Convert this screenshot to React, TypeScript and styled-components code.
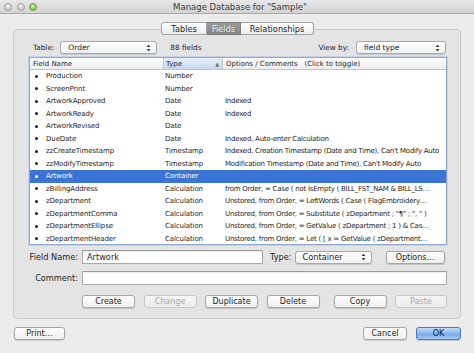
import React from 'react';
import styled, { createGlobalStyle, css } from 'styled-components';

const GlobalStyle = createGlobalStyle`
  html, body { margin: 0; padding: 0; }
  body {
    background: #ececec;
    font-family: "DejaVu Sans", "Liberation Sans", sans-serif;
    color: #1e1e1e;
  }
`;

const Window = styled.div`
  width: 474px;
  height: 353px;
  background: #ececec;
  display: flex;
  flex-direction: column;
  overflow: hidden;
`;

const TitleBar = styled.div`
  height: 13px;
  display: grid;
  grid-template-columns: 1fr auto 1fr;
  align-items: center;
  background: linear-gradient(#e8e8e8, #d3d3d3);
  border-bottom: 1px solid #a9a9a9;
`;

const Lights = styled.div`
  display: flex;
  gap: 4.5px;
  padding-left: 4px;
`;

const Light = styled.span<{ $green?: boolean }>`
  width: 8px;
  height: 8px;
  border-radius: 50%;
  box-sizing: border-box;
  border: 1px solid ${(p) => (p.$green ? '#6a9d45' : '#a3a3a3')};
  background: ${(p) =>
    p.$green
      ? 'radial-gradient(circle at 50% 35%, #d4f2b4, #7cc64a 70%)'
      : 'radial-gradient(circle at 50% 35%, #f4f4f4, #c9c9c9 70%)'};
`;

const Title = styled.div`
  font-size: 8.5px;
  color: #3c3c3c;
  padding-left: 6px;
`;

const TabRow = styled.div`
  display: flex;
  justify-content: center;
  margin-top: 8px;
  position: relative;
  z-index: 1;
  padding-left: 1px;
`;

const Tab = styled.div<{ $active?: boolean; $w: number }>`
  width: ${(p) => p.$w}px;
  height: 13px;
  box-sizing: border-box;
  display: flex;
  align-items: center;
  justify-content: center;
  font-size: 8.2px;
  border: 1px solid #a4a4a4;
  border-left-width: 0;
  background: linear-gradient(#ffffff, #ededed);
  color: #1e1e1e;
  &:first-child {
    border-left-width: 1px;
    border-radius: 3px 0 0 3px;
  }
  &:last-child {
    border-radius: 0 3px 3px 0;
  }
  ${(p) =>
    p.$active &&
    css`
      background: linear-gradient(#9a9a9a, #858585);
      border-color: #7c7c7c;
      color: #e6e6e6;
    `}
`;

const GroupBox = styled.div`
  margin: -6px 13px 0 13px;
  height: 290px;
  box-sizing: border-box;
  border: 1px solid #cbcbcb;
  border-radius: 4px;
  background: #e4e4e4;
  padding: 11px 13px 0 15px;
  display: flex;
  flex-direction: column;
`;

const TopRow = styled.div`
  display: flex;
  align-items: center;
  height: 13px;
`;

const Label = styled.span<{ $ml?: number; $size?: number }>`
  font-size: ${(p) => p.$size ?? 7.3}px;
  color: #1e1e1e;
  margin-left: ${(p) => p.$ml ?? 0}px;
  white-space: nowrap;
`;

const Spacer = styled.div`
  flex: 1;
`;

const SelectBox = styled.div<{ $w: number; $ml?: number; $size?: number }>`
  width: ${(p) => p.$w}px;
  height: 13px;
  margin-left: ${(p) => p.$ml ?? 0}px;
  box-sizing: border-box;
  display: flex;
  align-items: center;
  justify-content: space-between;
  padding: 0 5px 0 7px;
  font-size: ${(p) => p.$size ?? 7.5}px;
  border: 1px solid #a9a9a9;
  border-radius: 3px;
  background: linear-gradient(#ffffff, #f0f0f0);
  box-shadow: 0 0.5px 1px rgba(0, 0, 0, 0.12);
`;

const Arrows = () => (
  <svg width="5" height="8" viewBox="0 0 5 8">
    <path d="M2.5 0.5 L4.5 3 L0.5 3 Z" fill="#444" />
    <path d="M2.5 7.5 L4.5 5 L0.5 5 Z" fill="#444" />
  </svg>
);

const List = styled.div`
  margin-top: 3px;
  height: 188px;
  box-sizing: border-box;
  border: 1px solid #8ea8cc;
  box-shadow: 0 0 0 1px #c3d4ea;
  background: #ffffff;
  overflow: hidden;
`;

const Columns = css`
  display: grid;
  grid-template-columns: 133px 60px 1fr;
  align-items: center;
`;

const ListHeader = styled.div`
  ${Columns};
  height: 12px;
  box-sizing: border-box;
  border-bottom: 1px solid #c4c4c4;
  background: linear-gradient(#ffffff, #eeeeee);
  font-size: 7px;
`;

const HeaderCell = styled.div<{ $sorted?: boolean }>`
  height: 100%;
  display: flex;
  align-items: center;
  justify-content: space-between;
  padding-left: 3px;
  padding-right: 3px;
  box-sizing: border-box;
  white-space: nowrap;
  overflow: hidden;
  ${(p) =>
    p.$sorted &&
    css`
      padding-left: 2px;
      background: linear-gradient(#e6eef9, #c7d8ef);
      border-left: 1px solid #c4c4c4;
      border-right: 1px solid #c4c4c4;
    `}
`;

const SortArrow = styled.span`
  font-size: 5px;
  color: #55677f;
`;

const Row = styled.div<{ $selected?: boolean }>`
  ${Columns};
  height: 12.5px;
  font-size: 7px;
  letter-spacing: -0.1px;
  color: ${(p) => (p.$selected ? '#ffffff' : '#1e1e1e')};
  background: ${(p) => (p.$selected ? '#3a74d4' : 'transparent')};
`;

const NameCell = styled.div`
  display: flex;
  align-items: center;
  padding-left: 4px;
  white-space: nowrap;
`;

const Bullet = styled.span`
  width: 3px;
  height: 3px;
  border-radius: 50%;
  background: currentColor;
  margin-right: 8px;
  margin-left: 1px;
`;

const Cell = styled.div<{ $tight?: boolean }>`
  padding-left: 2px;
  white-space: nowrap;
  overflow: hidden;
  text-overflow: ellipsis;
  ${(p) => p.$tight && 'letter-spacing: -0.24px;'}
`;

const FormRow = styled.div<{ $mt: number }>`
  display: flex;
  align-items: center;
  height: 14px;
  margin-top: ${(p) => p.$mt}px;
`;

const FormLabel = styled.label`
  width: 49px;
  margin-right: 4px;
  text-align: right;
  font-size: 8.2px;
  white-space: nowrap;
  display: flex;
  justify-content: flex-end;
`;

const TextInput = styled.input<{ $w?: number }>`
  ${(p) => (p.$w ? `width: ${p.$w}px;` : 'flex: 1;')}
  height: 14px;
  box-sizing: border-box;
  margin: 0;
  padding: 0 0 0 4px;
  border: 1px solid #aaaaaa;
  border-top-color: #9c9c9c;
  box-shadow: inset 0 1px 1px rgba(0, 0, 0, 0.08);
  background: #ffffff;
  font-family: inherit;
  font-size: 8.2px;
  color: #1e1e1e;
  outline: none;
`;

const Button = styled.div<{ $w: number; $disabled?: boolean; $primary?: boolean; $ml?: number }>`
  width: ${(p) => p.$w}px;
  height: 13px;
  margin-left: ${(p) => p.$ml ?? 0}px;
  box-sizing: border-box;
  display: flex;
  align-items: center;
  justify-content: center;
  font-size: 8px;
  border: 1px solid #a5a5a5;
  border-radius: 3px;
  background: linear-gradient(#ffffff, #efefef);
  box-shadow: 0 0.5px 1px rgba(0, 0, 0, 0.15);
  color: #1e1e1e;
  white-space: nowrap;
  ${(p) =>
    p.$disabled &&
    css`
      color: #a9a9a9;
      border-color: #c6c6c6;
      background: linear-gradient(#f6f6f6, #ececec);
      box-shadow: none;
    `}
  ${(p) =>
    p.$primary &&
    css`
      border-color: #5479b3;
      background: linear-gradient(#c6ddf8, #86b5ee 50%, #6fa6ea 51%, #a2caf4);
      color: #10203a;
    `}
`;

const ButtonRow = styled.div`
  display: flex;
  gap: 8.5px;
  margin-top: 10px;
  padding-left: 53px;
`;

const Footer = styled.div`
  display: flex;
  align-items: center;
  margin-top: 8px;
  padding: 0 13px 0 14px;
  gap: 9px;
`;

type Field = { name: string; type: string; options: string };

const fields: Field[] = [
  { name: 'Production', type: 'Number', options: '' },
  { name: 'ScreenPrint', type: 'Number', options: '' },
  { name: 'ArtworkApproved', type: 'Date', options: 'Indexed' },
  { name: 'ArtworkReady', type: 'Date', options: 'Indexed' },
  { name: 'ArtworkRevised', type: 'Date', options: '' },
  { name: 'DueDate', type: 'Date', options: 'Indexed, Auto-enter Calculation' },
  {
    name: 'zzCreateTimestamp',
    type: 'Timestamp',
    options: "Indexed, Creation Timestamp (Date and Time), Can't Modify Auto",
  },
  {
    name: 'zzModifyTimestamp',
    type: 'Timestamp',
    options: "Modification Timestamp (Date and Time), Can't Modify Auto",
  },
  { name: 'Artwork', type: 'Container', options: '' },
  {
    name: 'zBillingAddress',
    type: 'Calculation',
    options: 'from Order, = Case ( not IsEmpty ( BILL_FST_NAM & BILL_LS…',
  },
  {
    name: 'zDepartment',
    type: 'Calculation',
    options: 'Unstored, from Order, = LeftWords (  Case ( FlagEmbroidery…',
  },
  {
    name: 'zDepartmentComma',
    type: 'Calculation',
    options: 'Unstored, from Order, = Substitute ( zDepartment ; "¶" ; ", " )',
  },
  {
    name: 'zDepartmentEllipse',
    type: 'Calculation',
    options: 'Unstored, from Order, = GetValue ( zDepartment ; 1 ) & Cas…',
  },
  {
    name: 'zDepartmentHeader',
    type: 'Calculation',
    options: 'Unstored, from Order, = Let ( [ x = GetValue ( zDepartment…',
  },
];

const App = () => (
  <>
    <GlobalStyle />
    <Window>
      <TitleBar>
        <Lights>
          <Light />
          <Light />
          <Light $green />
        </Lights>
        <Title>Manage Database for "Sample"</Title>
        <div />
      </TitleBar>

      <TabRow>
        <Tab $w={46}>Tables</Tab>
        <Tab $w={34} $active>
          Fields
        </Tab>
        <Tab $w={73}>Relationships</Tab>
      </TabRow>

      <GroupBox>
        <TopRow>
          <Label $ml={4}>Table:</Label>
          <SelectBox $w={97} $ml={6}>
            <span>Order</span>
            <Arrows />
          </SelectBox>
          <Label $ml={13}>88 fields</Label>
          <Spacer />
          <Label>View by:</Label>
          <SelectBox $w={90} $ml={7}>
            <span>field type</span>
            <Arrows />
          </SelectBox>
          <div style={{ width: 1 }} />
        </TopRow>

        <List>
          <ListHeader>
            <HeaderCell>Field Name</HeaderCell>
            <HeaderCell $sorted>
              <span>Type</span>
              <SortArrow>▲</SortArrow>
            </HeaderCell>
            <HeaderCell>Options / Comments&nbsp;&nbsp;&nbsp;(Click to toggle)</HeaderCell>
          </ListHeader>
          {fields.map((f) => (
            <Row key={f.name} $selected={f.name === 'Artwork'}>
              <NameCell>
                <Bullet />
                {f.name}
              </NameCell>
              <Cell>{f.type}</Cell>
              <Cell $tight>{f.options}</Cell>
            </Row>
          ))}
        </List>

        <FormRow $mt={5}>
          <FormLabel>Field Name:</FormLabel>
          <TextInput $w={181} defaultValue="Artwork" readOnly />
          <Label $ml={7} $size={8.2}>
            Type:
          </Label>
          <SelectBox $w={77} $ml={3} $size={8.2}>
            <span>Container</span>
            <Arrows />
          </SelectBox>
          <Button $w={59} $ml={14}>
            Options…
          </Button>
        </FormRow>

        <FormRow $mt={7}>
          <FormLabel>Comment:</FormLabel>
          <TextInput readOnly />
        </FormRow>

        <ButtonRow>
          <Button $w={53}>Create</Button>
          <Button $w={53} $disabled>
            Change
          </Button>
          <Button $w={53}>Duplicate</Button>
          <Button $w={53}>Delete</Button>
          <Button $w={53} $ml={5.5}>
            Copy
          </Button>
          <Button $w={52} $disabled>
            Paste
          </Button>
        </ButtonRow>
      </GroupBox>

      <Footer>
        <Button $w={51}>Print…</Button>
        <Spacer />
        <Button $w={44}>Cancel</Button>
        <Button $w={45} $primary>
          OK
        </Button>
      </Footer>
    </Window>
  </>
);

export default App;
